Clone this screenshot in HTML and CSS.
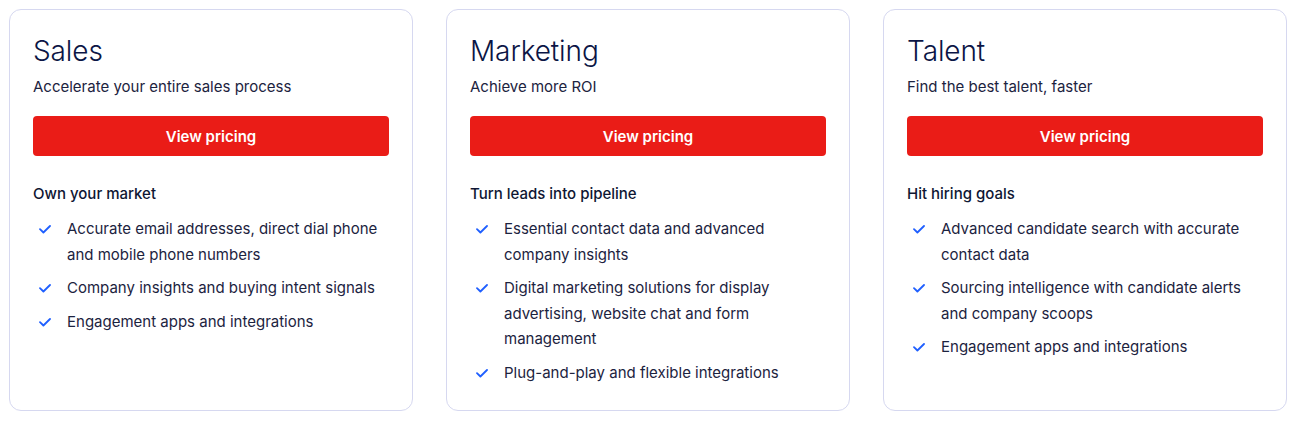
FILE: index.html
```html
<!DOCTYPE html>
<html lang="en">
<head>
<meta charset="utf-8">
<title>Pricing</title>
<link rel="stylesheet" href="styles.css">
</head>
<body>
<div class="cards">
  <div class="card">
    <h2 class="title">Sales</h2>
    <p class="sub">Accelerate your entire sales process</p>
    <a class="btn" href="#">View pricing</a>
    <h3 class="head">Own your market</h3>
    <ul class="list">
      <li><svg class="chk" viewBox="0 0 12 9"><path d="M1 4.2L4.4 7.5L11 1"/></svg><span>Accurate email addresses, direct dial phone and mobile phone numbers</span></li>
      <li><svg class="chk" viewBox="0 0 12 9"><path d="M1 4.2L4.4 7.5L11 1"/></svg><span>Company insights and buying intent signals</span></li>
      <li><svg class="chk" viewBox="0 0 12 9"><path d="M1 4.2L4.4 7.5L11 1"/></svg><span>Engagement apps and integrations</span></li>
    </ul>
  </div>
  <div class="card">
    <h2 class="title">Marketing</h2>
    <p class="sub">Achieve more ROI</p>
    <a class="btn" href="#">View pricing</a>
    <h3 class="head">Turn leads into pipeline</h3>
    <ul class="list">
      <li><svg class="chk" viewBox="0 0 12 9"><path d="M1 4.2L4.4 7.5L11 1"/></svg><span>Essential contact data and advanced company insights</span></li>
      <li><svg class="chk" viewBox="0 0 12 9"><path d="M1 4.2L4.4 7.5L11 1"/></svg><span>Digital marketing solutions for display advertising, website chat and form management</span></li>
      <li><svg class="chk" viewBox="0 0 12 9"><path d="M1 4.2L4.4 7.5L11 1"/></svg><span>Plug-and-play and flexible integrations</span></li>
    </ul>
  </div>
  <div class="card">
    <h2 class="title">Talent</h2>
    <p class="sub">Find the best talent, faster</p>
    <a class="btn" href="#">View pricing</a>
    <h3 class="head">Hit hiring goals</h3>
    <ul class="list">
      <li><svg class="chk" viewBox="0 0 12 9"><path d="M1 4.2L4.4 7.5L11 1"/></svg><span>Advanced candidate search with accurate contact data</span></li>
      <li><svg class="chk" viewBox="0 0 12 9"><path d="M1 4.2L4.4 7.5L11 1"/></svg><span>Sourcing intelligence with candidate alerts and company scoops</span></li>
      <li><svg class="chk" viewBox="0 0 12 9"><path d="M1 4.2L4.4 7.5L11 1"/></svg><span>Engagement apps and integrations</span></li>
    </ul>
  </div>
</div>
</body>
</html>
```
FILE: styles.css
```css
html, body {
  margin: 0;
  padding: 0;
  background: #fff;
}
body {
  font-family: Inter, "Noto Sans", sans-serif;
  color: #0e1633;
}
.cards {
  display: grid;
  grid-template-columns: repeat(3, 1fr);
  column-gap: 33px;
  padding: 9px 10px 10px 9px;
}
.card {
  border: 1px solid #d6d8f0;
  border-radius: 12px;
  padding: 23px 23px 25px 23px;
  display: flex;
  flex-direction: column;
}
.title {
  margin: 0;
  font-size: 28px;
  font-weight: 300;
  line-height: 36px;
  color: #0b1545;
  letter-spacing: -0.1px;
}
.sub {
  margin: 7px 0 0;
  font-size: 15px;
  line-height: 22px;
  color: #1c2340;
}
.btn {
  margin-top: 18px;
  height: 40px;
  border-radius: 4px;
  background: #ea1c17;
  color: #fff;
  font-size: 15px;
  font-weight: 600;
  text-decoration: none;
  display: flex;
  align-items: center;
  justify-content: center;
}
.head {
  margin: 27px 0 0;
  font-size: 15px;
  font-weight: 500;
  line-height: 22px;
  color: #0e1633;
}
.list {
  list-style: none;
  margin: 11px 0 0;
  padding: 0;
  display: flex;
  flex-direction: column;
  gap: 8px;
}
.list li {
  display: flex;
  align-items: flex-start;
  font-size: 15px;
  line-height: 25.5px;
  color: #1c2340;
}
.chk {
  flex: none;
  width: 12px;
  height: 9px;
  margin: 9px 16px 0 6px;
  fill: none;
  stroke: #1f5fff;
  stroke-width: 1.8;
  stroke-linecap: round;
  stroke-linejoin: round;
}
.list span {
  flex: 1;
  padding-right: 4px;
}
```
